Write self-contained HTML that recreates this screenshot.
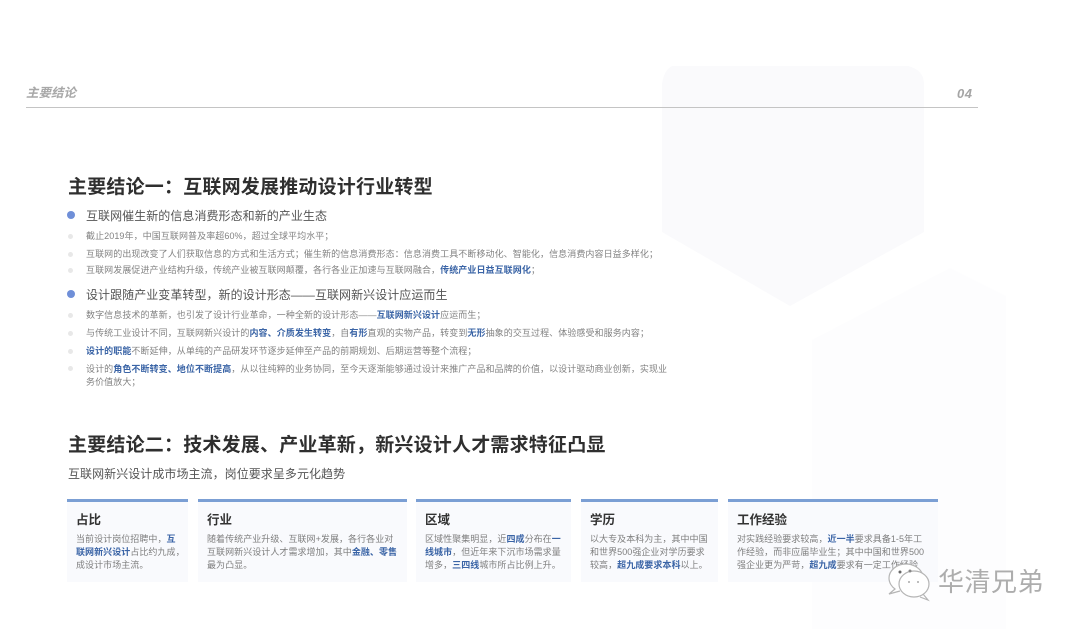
<!DOCTYPE html>
<html lang="zh"><head><meta charset="utf-8"><title>主要结论</title>
<style>
html,body{margin:0;padding:0;background:#fff}
#p{position:relative;width:1080px;height:629px;overflow:hidden;background:#fff;font-family:"Liberation Sans","Noto Sans CJK SC",sans-serif;color:#777}
#p div{position:absolute;white-space:nowrap}
#w{left:0;top:0;width:1080px;height:629px;filter:blur(.35px)}
.h{font-size:19px;font-weight:700;color:#2f2f2f;line-height:24px;left:68px;letter-spacing:.2px}
.s{font-size:12px;line-height:16px;left:86px;color:#555;letter-spacing:.05px}
.t{font-size:9px;line-height:12px;left:86px;color:#828282;letter-spacing:.08px}
.d{width:8px;height:8px;border-radius:50%;background:#6f8fd8;left:67px}
.e{width:5px;height:5px;border-radius:50%;background:#e8e8e8;left:68px}
b{color:#3a64a6;font-weight:700}
.c{background:#f9fafd;top:499px;height:83px;border-top:3px solid #7b9fd4;box-sizing:border-box}
.ct{font-size:12.5px;line-height:16px;font-weight:700;color:#333;top:512px}
.cb{font-size:9px;line-height:13px;color:#7e7e7e;top:533px;letter-spacing:.05px}
</style></head><body><div id="p">
<svg style="position:absolute;left:0;top:0" width="1080" height="629">
<path d="M672 66H908Q924 70 924 84V232L790 306L662 232V84Q664 70 672 66Z" fill="#fafafc"/>
<path d="M812 340L950 268L1006 296V629H812Z" fill="#fdfdfe"/>
</svg>
<div id="w">
<div style="left:26px;top:85px;font-size:12.5px;line-height:16px;font-style:italic;font-weight:700;color:#a8a8a8">主要结论</div>
<div style="left:957px;top:86px;font-size:13px;line-height:16px;font-style:italic;font-weight:700;color:#a5a5a5;letter-spacing:.5px">04</div>
<div style="left:26px;top:107px;width:952px;height:1px;background:#c4c4c4"></div>

<div class="h" style="top:176px">主要结论一：互联网发展推动设计行业转型</div>
<div class="d" style="top:211px"></div>
<div class="s" style="top:208px">互联网催生新的信息消费形态和新的产业生态</div>
<div class="e" style="top:234px"></div>
<div class="t" style="top:230px">截止2019年，中国互联网普及率超60%，超过全球平均水平；</div>
<div class="e" style="top:252px"></div>
<div class="t" style="top:248px">互联网的出现改变了人们获取信息的方式和生活方式；催生新的信息消费形态：信息消费工具不断移动化、智能化，信息消费内容日益多样化；</div>
<div class="e" style="top:268px"></div>
<div class="t" style="top:264px">互联网发展促进产业结构升级，传统产业被互联网颠覆，各行各业正加速与互联网融合，<b>传统产业日益互联网化</b>；</div>
<div class="d" style="top:290px"></div>
<div class="s" style="top:287px">设计跟随产业变革转型，新的设计形态——互联网新兴设计应运而生</div>
<div class="e" style="top:313px"></div>
<div class="t" style="top:309px">数字信息技术的革新，也引发了设计行业革命，一种全新的设计形态——<b>互联网新兴设计</b>应运而生；</div>
<div class="e" style="top:331px"></div>
<div class="t" style="top:327px">与传统工业设计不同，互联网新兴设计的<b>内容、介质发生转变</b>，自<b>有形</b>直观的实物产品，转变到<b>无形</b>抽象的交互过程、体验感受和服务内容；</div>
<div class="e" style="top:349px"></div>
<div class="t" style="top:345px"><b>设计的职能</b>不断延伸，从单纯的产品研发环节逐步延伸至产品的前期规划、后期运营等整个流程；</div>
<div class="e" style="top:366px"></div>
<div class="t" style="top:363px">设计的<b>角色不断转变、地位不断提高</b>，从以往纯粹的业务协同，至今天逐渐能够通过设计来推广产品和品牌的价值，以设计驱动商业创新，实现业</div>
<div class="t" style="top:376px">务价值放大；</div>

<div class="h" style="top:434px">主要结论二：技术发展、产业革新，新兴设计人才需求特征凸显</div>
<div class="s" style="top:466px;left:68px">互联网新兴设计成市场主流，岗位要求呈多元化趋势</div>

<div class="c" style="left:67px;width:121px"></div>
<div class="c" style="left:198px;width:209px"></div>
<div class="c" style="left:416px;width:155px"></div>
<div class="c" style="left:581px;width:137px"></div>
<div class="c" style="left:728px;width:210px"></div>

<div class="ct" style="left:76px">占比</div>
<div class="cb" style="left:76px">当前设计岗位招聘中，<b>互</b><br><b>联网新兴设计</b>占比约九成，<br>成设计市场主流。</div>
<div class="ct" style="left:207px">行业</div>
<div class="cb" style="left:207px">随着传统产业升级、互联网+发展，各行各业对<br>互联网新兴设计人才需求增加，其中<b>金融、零售</b><br>最为凸显。</div>
<div class="ct" style="left:425px">区域</div>
<div class="cb" style="left:425px">区域性聚集明显，近<b>四成</b>分布在<b>一</b><br><b>线城市</b>，但近年来下沉市场需求量<br>增多，<b>三四线</b>城市所占比例上升。</div>
<div class="ct" style="left:590px">学历</div>
<div class="cb" style="left:590px">以大专及本科为主，其中中国<br>和世界500强企业对学历要求<br>较高，<b>超九成要求本科</b>以上。</div>
<div class="ct" style="left:737px">工作经验</div>
<div class="cb" style="left:737px">对实践经验要求较高，<b>近一半</b>要求具备1-5年工<br>作经验，而非应届毕业生；其中中国和世界500<br>强企业更为严苛，<b>超九成</b>要求有一定工作经验</div>

<svg style="position:absolute;left:886px;top:562px" width="54" height="44" fill="none" stroke="#b5b5b5" stroke-width="1.2">
<path d="M36 11C33 5 26 2 20 2C10 2 3 9 3 16C3 21 6 25 9 27L3 32L14 29" fill="#fff"/>
<ellipse cx="28" cy="22" rx="15" ry="13" fill="#fff"/>
<path d="M37 32L42 38L34 35"/>
<circle cx="14" cy="10" r="1.5" fill="#666" stroke="none"/>
<circle cx="24" cy="9" r="1.5" fill="#888" stroke="none"/>
<circle cx="23" cy="20" r="1" fill="#aaa" stroke="none"/>
<circle cx="32" cy="20" r="1" fill="#aaa" stroke="none"/>
</svg>
<div style="left:938px;top:566px;font-size:26px;line-height:32px;color:#adadad;letter-spacing:.5px;text-shadow:0 0 2px #fff">华清兄弟</div>
</div>
</div></body></html>
